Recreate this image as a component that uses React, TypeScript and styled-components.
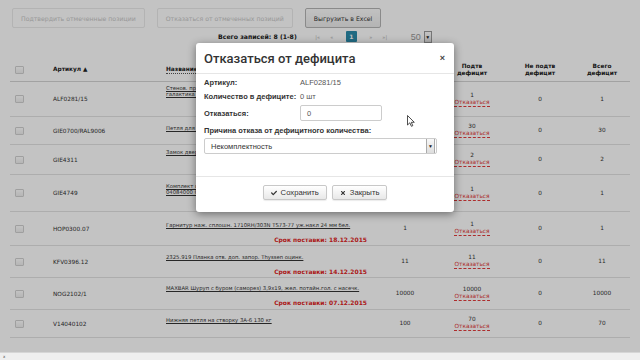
import React from 'react';
import styled, { createGlobalStyle } from 'styled-components';
import { FaCheck, FaTimes } from 'react-icons/fa';

const Global = createGlobalStyle`
  html, body { margin: 0; padding: 0; background: #fff; }
  body { width: 640px; height: 360px; overflow: hidden; font-family: "DejaVu Sans", Verdana, sans-serif; color: #333; }
  * { box-sizing: border-box; }
`;

const Screen = styled.div`
  position: relative;
  width: 640px;
  height: 360px;
  display: flex;
  flex-direction: column;
  overflow: hidden;
`;

const Page = styled.div`
  position: relative;
  height: 352px;
  background: #fff;
  overflow: hidden;
`;

const StatusBar = styled.div`
  height: 8px;
  background: #efefef;
  border-top: 1px solid #d6d6d6;
  font-size: 4px;
  line-height: 7px;
  color: #555;
  padding-left: 3px;
`;

const Toolbar = styled.div`
  display: flex;
  gap: 12px;
  padding: 8px 12px 0;
`;

const ToolButton = styled.button<{ $disabled?: boolean }>`
  height: 20px;
  padding: 0 8px;
  font-family: "DejaVu Sans", Verdana, sans-serif;
  font-size: 6.2px;
  border-radius: 2px;
  border: 1px solid ${p => (p.$disabled ? '#eaeaea' : '#b5b5b5')};
  background: ${p => (p.$disabled ? '#fff' : 'linear-gradient(#fdfdfd, #ececec)')};
  color: ${p => (p.$disabled ? '#c8c8c8' : '#333')};
`;

const InfoRow = styled.div`
  display: flex;
  align-items: center;
  height: 13px;
  margin-top: 2px;
  padding-left: 218px;
`;

const Total = styled.span`
  font-weight: bold;
  font-size: 6.2px;
  color: #222;
  margin-right: 16px;
`;

const Pager = styled.div`
  display: flex;
  align-items: center;
  gap: 4px;
  margin-right: 21px;
`;

const PageLink = styled.span`
  font-size: 5px;
  color: #b0b0b0;
  width: 10px;
  text-align: center;
`;

const ActivePage = styled.span`
  width: 11px;
  height: 11px;
  margin: 0 5px;
  background: #2a8bab;
  color: #fff;
  font-size: 6px;
  font-weight: bold;
  display: flex;
  align-items: center;
  justify-content: center;
  border-radius: 1px;
`;

const PerPage = styled.div`
  display: flex;
  align-items: center;
  gap: 3px;
  font-family: "Liberation Sans", Arial, sans-serif;
  font-size: 9px;
  color: #999;
`;

const SelectArrow = styled.span`
  width: 8px;
  height: 12px;
  border: 1px solid #999;
  background: linear-gradient(#fff, #e2e2e2);
  display: flex;
  align-items: center;
  justify-content: center;
  font-size: 5px;
  color: #222;
`;

const Table = styled.div`
  margin: 15px 10px 0;
`;

const Row = styled.div<{ $h: number; $head?: boolean }>`
  display: grid;
  grid-template-columns: 35px 115px 212px 66px 68px 68px 56px;
  height: ${p => p.$h}px;
  border-bottom: 1px solid ${p => (p.$head ? '#d4d4d4' : '#e2e2e2')};
  font-size: 5.8px;
`;

const Cell = styled.div<{ $center?: boolean; $top?: number }>`
  display: flex;
  flex-direction: column;
  justify-content: ${p => (p.$top !== undefined ? 'flex-start' : 'center')};
  align-items: ${p => (p.$center ? 'center' : 'flex-start')};
  text-align: ${p => (p.$center ? 'center' : 'left')};
  padding-top: ${p => p.$top ?? 0}px;
  overflow: hidden;
  white-space: nowrap;
`;

const CheckCell = styled(Cell)`
  padding-left: 5px;
`;

const Check = styled.span`
  width: 9px;
  height: 8px;
  border: 1px solid #d0d0d0;
  border-radius: 1px;
  background: linear-gradient(#fff, #eee);
`;

const ArtCell = styled(Cell)`
  padding-left: 8px;
  color: #333;
`;

const HeadText = styled.span<{ $link?: boolean }>`
  font-weight: bold;
  color: #222;
  line-height: 7px;
  ${p => (p.$link ? 'border-bottom: 1px dotted #555; align-self: flex-start;' : '')}
`;

const NameCell = styled(Cell)`
  padding-left: 6px;
  padding-right: 5px;
  align-items: stretch;
`;

const NameLink = styled.span`
  color: #333;
  text-decoration: underline;
  line-height: 5.5px;
  font-size: 5.3px;
`;

const Due = styled.span`
  color: #e02424;
  font-weight: bold;
  text-align: right;
  margin-top: 7px;
  font-size: 6px;
`;

const Num = styled.span`
  color: #333;
  line-height: 7px;
`;

const Refuse = styled.span`
  color: #e23a3a;
  line-height: 7px;
  border-bottom: 1px dashed #e23a3a;
`;

const Overlay = styled.div`
  position: absolute;
  inset: 0;
  background: rgba(0, 0, 0, 0.235);
`;

const Modal = styled.div`
  position: absolute;
  left: 196px;
  top: 43px;
  width: 258px;
  height: 169px;
  background: #fff;
  border-radius: 3px;
  box-shadow: 0 2px 8px rgba(0, 0, 0, 0.45);
  font-family: "Liberation Sans", Arial, sans-serif;
  display: flex;
  flex-direction: column;
`;

const ModalHeader = styled.div`
  height: 31px;
  display: flex;
  align-items: center;
  justify-content: space-between;
  padding: 0 9px 0 8px;
  border-bottom: 1px solid #e6e6e6;
`;

const Title = styled.h3`
  margin: 0;
  font-family: Roboto, "Liberation Sans", sans-serif;
  font-size: 13px;
  font-weight: 500;
  color: #333;
`;

const Close = styled.span`
  font-size: 9px;
  font-weight: bold;
  color: #444;
`;

const ModalBody = styled.div`
  padding: 1px 17px 22px 8px;
  display: flex;
  flex-direction: column;
  font-size: 7.5px;
`;

const Field = styled.div<{ $h: number }>`
  display: flex;
  align-items: center;
  height: ${p => p.$h}px;
`;

const Label = styled.span`
  width: 96px;
  font-weight: bold;
  color: #333;
`;

const Value = styled.span`
  color: #555;
`;

const Input = styled.div`
  width: 82px;
  height: 16px;
  border: 1px solid #ccc;
  border-radius: 2px;
  padding-left: 6px;
  display: flex;
  align-items: center;
  color: #555;
`;

const ReasonLabel = styled.div`
  height: 12px;
  margin-top: 2px;
  display: flex;
  align-items: center;
  font-weight: bold;
  color: #333;
`;

const Select = styled.div`
  margin-top: 2px;
  height: 16px;
  border: 1px solid #ccc;
  border-radius: 2px;
  display: flex;
  align-items: center;
  justify-content: space-between;
  padding-left: 6px;
  color: #333;
`;

const SelectBtn = styled.span`
  width: 9px;
  height: 14px;
  background: linear-gradient(#f8f8f8, #ddd);
  border-left: 1px solid #aaa;
  border-right: 1px solid #aaa;
  display: flex;
  align-items: center;
  justify-content: center;
  font-size: 5px;
  color: #222;
  margin-right: 1px;
`;

const ModalFooter = styled.div`
  border-top: 1px solid #e6e6e6;
  display: flex;
  justify-content: center;
  gap: 5px;
  padding-top: 8px;
`;

const ModalButton = styled.button`
  height: 15px;
  padding: 0 7px;
  display: flex;
  align-items: center;
  gap: 4px;
  font-family: "Liberation Sans", Arial, sans-serif;
  font-size: 7.7px;
  color: #333;
  border: 1px solid #c8c8c8;
  border-radius: 2px;
  background: linear-gradient(#fff, #e8e8e8);
  box-shadow: 0 1px 1px rgba(0, 0, 0, 0.08);
  svg { width: 6px; height: 6px; color: #333; }
`;

const Cursor = styled.svg`
  position: absolute;
  left: 407px;
  top: 115px;
`;

type R = {
  art: string;
  name: string[];
  due?: string;
  qty: string;
  conf: string;
  tot: string;
  h: number;
  top: number;
};

const rows: R[] = [
  { art: 'ALF0281/15', name: ['Стенов. профиль 3000 мм', 'галактика серебро'], qty: '1', conf: '1', tot: '1', h: 35, top: 4 },
  { art: 'GIE0700/RAL9006', name: ['Петля для окна и двери'], qty: '30', conf: '30', tot: '30', h: 28, top: 9 },
  { art: 'GIE4311', name: ['Замок дверной GU-Secury'], qty: '2', conf: '2', tot: '2', h: 30, top: 5 },
  { art: 'GIE4749', name: ['Комплект цапф для замка', '04084000 Gretsch-Unitas'], qty: '1', conf: '1', tot: '1', h: 37, top: 9 },
  { art: 'HOP0300.07', name: ['Гарнитур наж. сплошн. 1710RH/303N TS73-77 уж.накл 24 мм бел.'], due: 'Срок поставки: 18.12.2015', qty: '1', conf: '1', tot: '1', h: 34, top: 11 },
  { art: 'KFV0396.12', name: ['2325.919 Планка отв. доп. запор. Thyssen оцинк.'], due: 'Срок поставки: 14.12.2015', qty: '11', conf: '11', tot: '11', h: 32, top: 9 },
  { art: 'NOG2102/1', name: ['MAXBAR Шуруп с буром (саморез) 3,9x19, жел. потайн.гол. с насечк.'], due: 'Срок поставки: 07.12.2015', qty: '10000', conf: '10000', tot: '10000', h: 32, top: 8 },
  { art: 'V14040102', name: ['Нижняя петля на створку 3А-6 130 кг'], qty: '100', conf: '70', tot: '70', h: 28, top: 8 },
];

export default function App() {
  return (
    <Screen>
      <Global />
      <Page>
        <Toolbar>
          <ToolButton $disabled>Подтвердить отмеченные позиции</ToolButton>
          <ToolButton $disabled>Отказаться от отмеченных позиций</ToolButton>
          <ToolButton>Выгрузить в Excel</ToolButton>
        </Toolbar>
        <InfoRow>
          <Total>Всего записей: 8 (1-8)</Total>
          <Pager>
            <PageLink>|«</PageLink>
            <PageLink>«</PageLink>
            <ActivePage>1</ActivePage>
            <PageLink>»</PageLink>
            <PageLink>»|</PageLink>
          </Pager>
          <PerPage>
            50
            <SelectArrow>▼</SelectArrow>
          </PerPage>
        </InfoRow>
        <Table>
          <Row $h={24} $head>
            <CheckCell><Check /></CheckCell>
            <ArtCell><HeadText>Артикул ▲</HeadText></ArtCell>
            <NameCell><HeadText $link>Название</HeadText></NameCell>
            <Cell $center><HeadText>Заказано</HeadText></Cell>
            <Cell $center><HeadText>Подтв<br />дефицит</HeadText></Cell>
            <Cell $center><HeadText>Не подтв<br />дефицит</HeadText></Cell>
            <Cell $center><HeadText>Всего<br />дефицит</HeadText></Cell>
          </Row>
          {rows.map(r => (
            <Row key={r.art} $h={r.h}>
              <CheckCell><Check /></CheckCell>
              <ArtCell>{r.art}</ArtCell>
              <NameCell $top={r.top}>
                {r.name.map(n => <NameLink key={n}>{n}</NameLink>)}
                {r.due && <Due>{r.due}</Due>}
              </NameCell>
              <Cell $center><Num>{r.qty}</Num></Cell>
              <Cell $center><Num>{r.conf}</Num><Refuse>Отказаться</Refuse></Cell>
              <Cell $center><Num>0</Num></Cell>
              <Cell $center><Num>{r.tot}</Num></Cell>
            </Row>
          ))}
        </Table>
        <Overlay />
        <Modal>
          <ModalHeader>
            <Title>Отказаться от дефицита</Title>
            <Close>×</Close>
          </ModalHeader>
          <ModalBody>
            <Field $h={14}><Label>Артикул:</Label><Value>ALF0281/15</Value></Field>
            <Field $h={15}><Label>Количество в дефиците:</Label><Value>0 шт</Value></Field>
            <Field $h={18}><Label>Отказаться:</Label><Input>0</Input></Field>
            <ReasonLabel>Причина отказа от дефицитного количества:</ReasonLabel>
            <Select>Некомплектность<SelectBtn>▼</SelectBtn></Select>
          </ModalBody>
          <ModalFooter>
            <ModalButton><FaCheck />Сохранить</ModalButton>
            <ModalButton><FaTimes />Закрыть</ModalButton>
          </ModalFooter>
        </Modal>
        <Cursor width="8" height="12" viewBox="0 0 8 12">
          <path d="M0.5 0.5 L0.5 10 L2.8 7.8 L4.4 11.3 L5.8 10.7 L4.3 7.3 L7.3 7.3 Z" fill="#fff" stroke="#222" strokeWidth="0.8" />
        </Cursor>
      </Page>
      <StatusBar>x</StatusBar>
    </Screen>
  );
}
